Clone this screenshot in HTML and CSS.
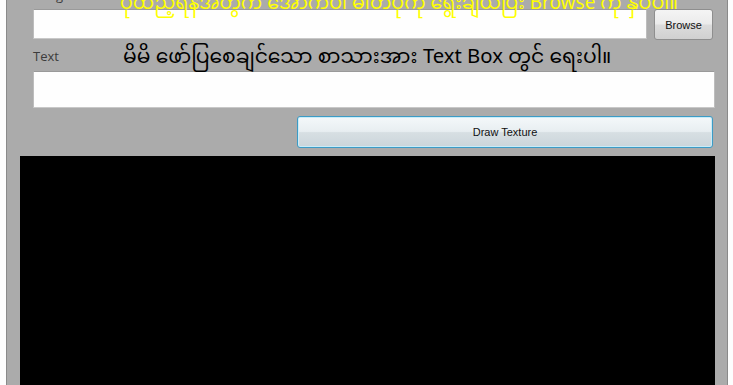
FILE: index.html
```html
<!DOCTYPE html>
<html lang="my">
<head>
    <meta charset="UTF-8">
    <title>Draw Texture</title>
    <link rel="stylesheet" href="styles.css">
</head>
<body>
    <div class="window">
        <div class="form">
            <label class="field-label">Image</label>
            <div class="image-row">
                <div class="textbox image-box"></div>
                <button class="btn btn-browse">Browse</button>
            </div>

            <label class="field-label text-label">Text</label>
            <div class="textbox text-box"></div>

            <div class="actions">
                <button class="btn btn-draw">Draw Texture</button>
            </div>
        </div>

        <div class="canvas"></div>

        <!-- caption overlays on the screenshot -->
        <p class="note note-top">ပုံထည့်ရန်အတွက် အောက်ပါ ဓါတ်ပုံကို ရွေးချယ်ပြီး Browse ကို နှိပ်ပါ။</p>
        <p class="note note-mid">မိမိ ဖော်ပြစေချင်သော စာသားအား Text Box တွင် ရေးပါ။</p>
    </div>
</body>
</html>
```

FILE: styles.css
```css
* {
    margin: 0;
    padding: 0;
    box-sizing: border-box;
}

body {
    background: #fdfdfd;
    height: 385px;
    overflow: hidden;
    font-family: 'Open Sans', 'Noto Sans', sans-serif;
}

.window {
    position: relative;
    margin-left: 6px;
    width: 722px;
    height: 385px;
    background: #ababab;
    border-left: 1px solid #8a8a8a;
    border-right: 1px solid #8a8a8a;
    overflow: hidden;
}

.form {
    display: flex;
    flex-direction: column;
    margin-top: -12px;
    padding-left: 26px;
    padding-right: 12px;
}

.field-label {
    display: block;
    font-size: 13px;
    line-height: 15px;
    color: #3c3c3c;
    margin-bottom: 6px;
}

.text-label {
    margin-top: 9px;
    margin-bottom: 7px;
}

.image-row {
    display: flex;
    gap: 7px;
}

.textbox {
    background: #fefefe;
    border: 1px solid #a0a0a0;
    border-color: #9a9a9a #bdbdbd #c8c8c8 #bdbdbd;
}

.image-box {
    width: 614px;
    height: 30px;
}

.text-box {
    width: 682px;
    height: 37px;
}

.btn {
    font-family: 'Liberation Sans', Arial, sans-serif;
    font-size: 11px;
    color: #111;
    border-radius: 3px;
    cursor: pointer;
}

.btn-browse {
    width: 59px;
    height: 31px;
    border: 1px solid #8e8e8e;
    background: linear-gradient(#f4f4f4 0%, #ebebeb 48%, #dcdcdc 52%, #d0d0d0 100%);
}

.actions {
    display: flex;
    justify-content: flex-end;
    margin-top: 8px;
    padding-right: 2px;
}

.btn-draw {
    width: 416px;
    height: 32px;
    border: 1px solid #3c9bc6;
    box-shadow: inset 0 0 0 1px #c8ecf8;
    background: linear-gradient(#f4f8fa 0%, #e8eef1 48%, #d7dfe3 52%, #cbd5da 100%);
}

.canvas {
    margin: 8px 12px 0 13px;
    height: 240px;
    background: #000;
}

.note {
    position: absolute;
    white-space: nowrap;
    font-family: 'Noto Sans Myanmar', 'Padauk', 'Myanmar Text', 'Noto Sans', sans-serif;
    font-size: 20px;
    line-height: 28px;
}

.note-top {
    left: 113px;
    top: -9px;
    font-size: 19px;
    color: #ffff00;
}

.note-mid {
    left: 116px;
    top: 44px;
    font-size: 20.3px;
    color: #000;
}
```
